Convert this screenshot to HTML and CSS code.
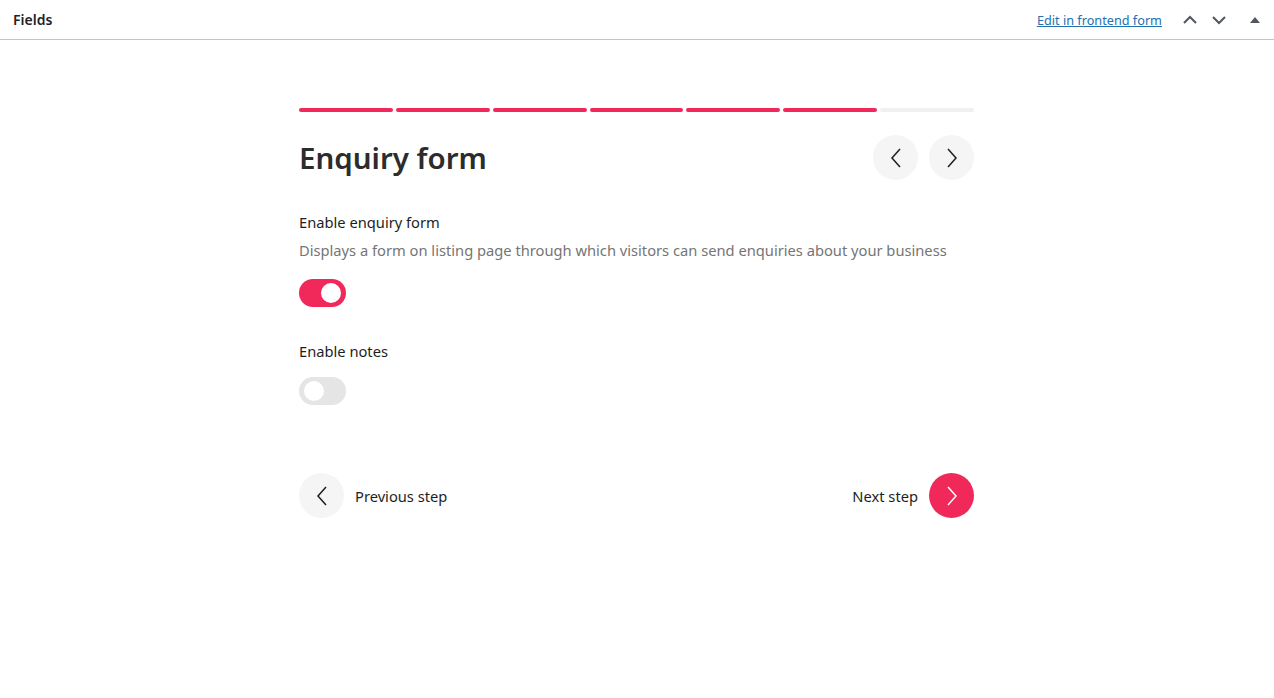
FILE: index.html
```html
<!DOCTYPE html>
<html lang="en">
<head>
  <meta charset="UTF-8" />
  <title>Fields</title>
  <link rel="stylesheet" href="styles.css">
</head>
<body>
  <header class="panel-head">
    <h2 class="panel-title">Fields</h2>
    <div class="panel-actions">
      <a href="#" class="edit-link">Edit in frontend form</a>
      <button class="head-btn" title="Move up">
        <svg width="16" height="16" viewBox="0 0 16 16"><path d="M2 11 L8 5 L14 11" fill="none" stroke="#50575e" stroke-width="2"/></svg>
      </button>
      <button class="head-btn" title="Move down">
        <svg width="16" height="16" viewBox="0 0 16 16"><path d="M2 5 L8 11 L14 5" fill="none" stroke="#50575e" stroke-width="2"/></svg>
      </button>
      <button class="head-btn toggle-btn" title="Toggle">
        <svg width="10" height="8" viewBox="0 0 10 8"><path d="M0 7 L5 1 L10 7 Z" fill="#50575e"/></svg>
      </button>
    </div>
  </header>

  <main class="wizard">
    <div class="progress">
      <span class="step done"></span>
      <span class="step done"></span>
      <span class="step done"></span>
      <span class="step done"></span>
      <span class="step done"></span>
      <span class="step done"></span>
      <span class="step"></span>
    </div>

    <div class="wizard-head">
      <h1>Enquiry form</h1>
      <div class="arrows">
        <button class="circle">
          <svg width="12" height="22" viewBox="0 0 12 22"><path d="M10 2 L2 11 L10 20" fill="none" stroke="#1e1e1e" stroke-width="1.5"/></svg>
        </button>
        <button class="circle">
          <svg width="12" height="22" viewBox="0 0 12 22"><path d="M2 2 L10 11 L2 20" fill="none" stroke="#1e1e1e" stroke-width="1.5"/></svg>
        </button>
      </div>
    </div>

    <div class="field">
      <label class="field-label">Enable enquiry form</label>
      <p class="field-desc">Displays a form on listing page through which visitors can send enquiries about your business</p>
      <span class="toggle on"></span>
    </div>

    <div class="field">
      <label class="field-label">Enable notes</label>
      <span class="toggle"></span>
    </div>

    <div class="wizard-foot">
      <button class="step-btn">
        <span class="circle">
          <svg width="12" height="22" viewBox="0 0 12 22"><path d="M10 2 L2 11 L10 20" fill="none" stroke="#1e1e1e" stroke-width="1.5"/></svg>
        </span>
        Previous step
      </button>
      <button class="step-btn">
        Next step
        <span class="circle primary">
          <svg width="12" height="22" viewBox="0 0 12 22"><path d="M2 2 L10 11 L2 20" fill="none" stroke="#fff" stroke-width="1.5"/></svg>
        </span>
      </button>
    </div>
  </main>
</body>
</html>
```

FILE: styles.css
```css
:root {
  --primary: #f1295b;
  --text: #1e1e1e;
  --muted: #757575;
  --soft: #f5f5f5;
}

body {
  margin: 0;
  font-family: 'Noto Sans', 'Open Sans', sans-serif;
  color: var(--text);
  background: #fff;
}

button {
  font-family: inherit;
  background: none;
  border: none;
  padding: 0;
  cursor: pointer;
}

.panel-head {
  height: 39px;
  border-bottom: 1px solid #c3c4c7;
  display: flex;
  align-items: center;
  justify-content: space-between;
  padding: 0 5px 0 13px;
}

.panel-title {
  margin: 0;
  font-size: 14px;
  font-weight: 600;
  color: #1d2327;
}

.panel-actions {
  display: flex;
  align-items: center;
}

.edit-link {
  font-size: 12.7px;
  color: #2271b1;
  margin-right: 13px;
}

.head-btn {
  width: 29px;
  height: 30px;
  display: flex;
  align-items: center;
  justify-content: center;
}

.toggle-btn {
  margin-left: 7px;
}

.wizard {
  box-sizing: border-box;
  width: 676px;
  padding: 68px 1px 0 0;
  margin: 0 auto;
}

.progress {
  display: flex;
  gap: 3px;
}

.step {
  flex: 1;
  height: 4px;
  border-radius: 2px;
  background: #f0f0f0;
}

.step.done {
  background: var(--primary);
}

.wizard-head {
  display: flex;
  justify-content: space-between;
  align-items: center;
  margin-top: 23px;
}

h1 {
  margin: 0;
  font-size: 29.5px;
  font-weight: 600;
  color: #2c2c2c;
}

.arrows {
  display: flex;
  gap: 11px;
}

.circle {
  width: 45px;
  height: 45px;
  border-radius: 50%;
  background: var(--soft);
  display: flex;
  align-items: center;
  justify-content: center;
}

.circle.primary {
  background: var(--primary);
}

.field {
  margin-top: 32px;
}

.field + .field {
  margin-top: 34px;
}

.field-label {
  display: block;
  font-size: 14.7px;
  line-height: 20px;
}

.field-desc {
  margin: 8px 0 0;
  font-size: 14.7px;
  line-height: 20px;
  color: var(--muted);
}

.toggle {
  display: block;
  position: relative;
  width: 47px;
  height: 28px;
  border-radius: 14px;
  background: #e5e5e5;
  margin-top: 16px;
}

.field-desc + .toggle {
  margin-top: 19px;
}

.toggle::after {
  content: '';
  position: absolute;
  top: 4px;
  left: 5px;
  width: 20px;
  height: 20px;
  border-radius: 50%;
  background: #fff;
}

.toggle.on {
  background: var(--primary);
}

.toggle.on::after {
  left: 22px;
}

.wizard-foot {
  display: flex;
  justify-content: space-between;
  margin-top: 68px;
}

.step-btn {
  display: flex;
  align-items: center;
  gap: 11px;
  font-size: 14.7px;
  color: var(--text);
}
```
